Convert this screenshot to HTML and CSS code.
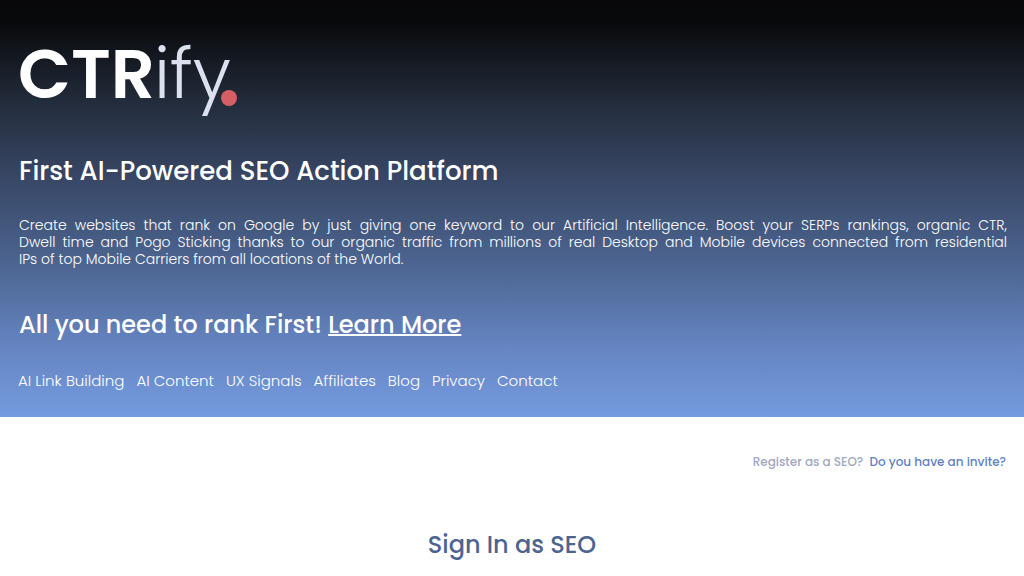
FILE: index.html
```html
<!DOCTYPE html>
<html lang="en">
<head>
<meta charset="utf-8">
<meta name="viewport" content="width=device-width, initial-scale=1">
<title>CTRify</title>
<link rel="stylesheet" href="styles.css">
</head>
<body>
<header class="hero">
  <a class="logo" href="#" aria-label="CTRify">
    <svg width="226" height="106" viewBox="0 0 226 106">
      <text class="logo-bold" x="0" y="78">CTR</text>
      <text class="logo-light" x="136" y="78">ify</text>
      <circle class="logo-dot" cx="211" cy="78" r="8"/>
    </svg>
  </a>
  <h1 class="title">First AI-Powered SEO Action Platform</h1>
  <p class="intro">
    <span class="intro-line">Create websites that rank on Google by just giving one keyword to our Artificial Intelligence. Boost your SERPs rankings, organic CTR,</span>
    <span class="intro-line">Dwell time and Pogo Sticking thanks to our organic traffic from millions of real Desktop and Mobile devices connected from residential</span>
    IPs of top Mobile Carriers from all locations of the World.
  </p>
  <h2 class="tagline">All you need to rank First! <a href="#">Learn More</a></h2>
  <nav class="links">
    <a href="#">AI Link Building</a>
    <a href="#">AI Content</a>
    <a href="#">UX Signals</a>
    <a href="#">Affiliates</a>
    <a href="#">Blog</a>
    <a href="#">Privacy</a>
    <a href="#">Contact</a>
  </nav>
</header>
<main class="sign-in">
  <p class="register">Register as a SEO? <a href="#">Do you have an invite?</a></p>
  <h2 class="form-title">Sign In as SEO</h2>
</main>
</body>
</html>
```
FILE: styles.css
```css
* {
  box-sizing: border-box;
}

body {
  margin: 0;
  background: #fff;
  font-family: Poppins, Inter, "Open Sans", sans-serif;
}

h1, h2, p {
  margin: 0;
  font-weight: 500;
}

.hero {
  padding: 20px 17px 24px 18px;
  color: #fff;
  background: linear-gradient(#08080a 0%, #08090b 5%, #222b3a 24%, #33405b 38%, #42567b 53%, #506a99 67%, #6584c1 83%, #749bdf 100%);
}

.logo {
  display: block;
}

.logo svg {
  display: block;
}

.logo-bold {
  font-size: 69px;
  font-weight: 600;
  fill: #fff;
}

.logo-light {
  font-size: 70px;
  font-weight: 300;
  fill: #dbe1ef;
}

.logo-dot {
  fill: #d65f65;
}

.title {
  margin-top: 25px;
  padding-left: 1px;
  font-size: 26px;
  line-height: 40px;
}

.intro {
  margin-top: 26px;
  padding-left: 1px;
  font-size: 14px;
  font-weight: 300;
  line-height: 17px;
}

.intro-line {
  display: block;
  text-align: justify;
  text-align-last: justify;
}

.tagline {
  margin-top: 39px;
  padding-left: 1px;
  font-size: 24px;
  line-height: 36px;
}

.tagline a {
  color: inherit;
  text-decoration-thickness: 2px;
}

.links {
  display: flex;
  flex-wrap: wrap;
  gap: 12px;
  margin-top: 26px;
  font-size: 15px;
  font-weight: 300;
  line-height: 24px;
}

.links a {
  color: inherit;
  text-decoration: none;
}

.sign-in {
  padding: 35px 18px 12px;
}

.register {
  color: #a1a8c3;
  font-size: 12px;
  line-height: 20px;
  text-align: right;
}

.register a {
  margin-left: 3px;
  color: #6282c1;
  text-decoration: none;
}

.form-title {
  margin-top: 55px;
  color: #4c6490;
  font-size: 24px;
  line-height: 36px;
  text-align: center;
}
```
